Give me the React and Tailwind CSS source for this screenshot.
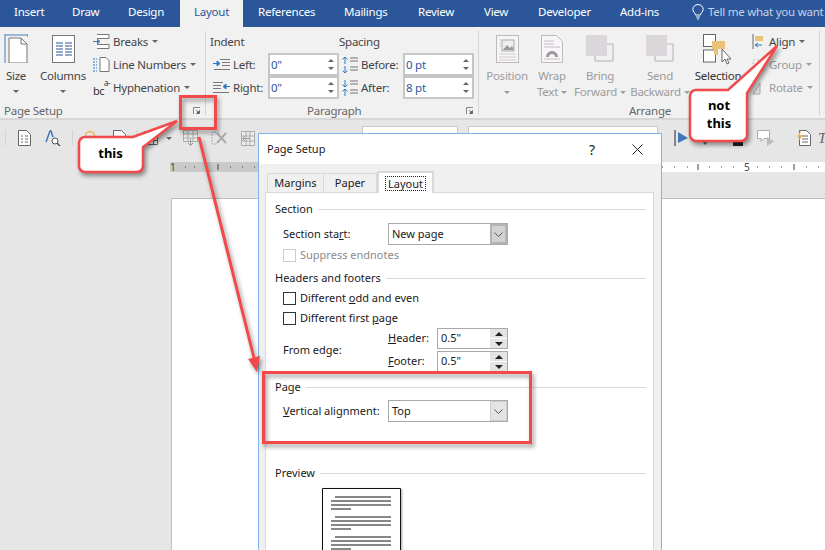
import React from "react";

const Caret = ({ className = "" }) => (
  <span className={`inline-block w-0 h-0 border-l-[3px] border-r-[3px] border-t-[3px] border-l-transparent border-r-transparent border-t-[#666] ${className}`} />
);

const Launcher = ({ className = "" }) => (
  <svg width="8" height="8" viewBox="0 0 8 8" className={className}>
    <path d="M.5 7V.5H7" fill="none" stroke="#888" />
    <path d="M3 3l2 2M6.500 3.500v3h-3z" fill="#555" stroke="#555" strokeWidth=".7" />
  </svg>
);

const Spin = ({ value }) => (
  <div className="w-[71px] h-[23px] shrink-0 border-2 border-[#c6c6c6] bg-white flex items-center justify-between pl-[1px] pr-[3px]">
    <span className="text-[#2b579a]">{value}</span>
    <span className="flex flex-col gap-[5px]">
      <span className="w-0 h-0 border-l-[3px] border-r-[3px] border-b-[3px] border-l-transparent border-r-transparent border-b-[#666]" />
      <span className="w-0 h-0 border-l-[3px] border-r-[3px] border-t-[3px] border-l-transparent border-r-transparent border-t-[#666]" />
    </span>
  </div>
);

const Legend = ({ children, className = "" }) => (
  <div className={`h-5 flex items-center gap-[5px] ${className}`}>
    <span>{children}</span>
    <span className="flex-1 h-[1px] bg-[#d8d8d8]" />
  </div>
);

const Select = ({ value, dark }) => (
  <div className="w-[120px] h-[22px] border border-[#a9a9a9] flex items-center bg-white">
    <span className="flex-1 pl-[3px]">{value}</span>
    <span className={`w-[17px] h-full flex items-center justify-center ${dark ? "bg-[#d2d2d2] border-2 border-[#b4b4b4]" : "bg-[#e4e4e4] border border-[#cfcfcf]"}`}>
      <svg width="9" height="5" viewBox="0 0 9 5"><path d="M.5.5l4 4 4-4" fill="none" stroke="#555" /></svg>
    </span>
  </div>
);

const Check = ({ disabled, children }) => (
  <div className="h-5 flex items-center gap-[4px] pl-[8px]">
    <span className={`w-[13px] h-[13px] border ${disabled ? "border-[#ccc]" : "border-[#333]"} bg-white`} />
    <span className={disabled ? "text-[#8a8a8a]" : ""}>{children}</span>
  </div>
);

const DlgSpin = ({ value }) => (
  <div className="w-[71px] h-[21px] border border-[#a9a9a9] flex items-center justify-between pl-[3px] bg-white">
    <span>{value}</span>
    <span className="w-[17px] h-full flex flex-col gap-[1px] bg-white">
      <span className="flex-1 bg-[#e4e4e4] flex items-center justify-center"><span className="w-0 h-0 border-l-[4px] border-r-[4px] border-b-[4px] border-l-transparent border-r-transparent border-b-[#222]" /></span>
      <span className="flex-1 bg-[#e4e4e4] flex items-center justify-center"><span className="w-0 h-0 border-l-[4px] border-r-[4px] border-t-[4px] border-l-transparent border-r-transparent border-t-[#222]" /></span>
    </span>
  </div>
);

const GrayBtn = ({ top, bottom, icon, width, caretInline, ml = "" }) => (
  <div className={`flex flex-col items-center text-[#9c9c9c] shrink-0 ${width} ${ml}`}>
    <div className="h-[41px] flex items-start pt-[8px]">{icon}</div>
    <div className="h-[16px] leading-[16px] whitespace-nowrap">{top}</div>
    <div className="h-[16px] leading-[16px] whitespace-nowrap flex items-center gap-[3px]">
      {bottom}
      {caretInline && <Caret className="opacity-60" />}
    </div>
  </div>
);

const BringIcon = () => (
  <svg width="28" height="27" viewBox="0 0 28 27">
    <path d="M9 21v5h18V9h-6" fill="#f3f0f3" stroke="#b5b2b5" />
    <rect x="0" y="0" width="21" height="21" fill="#dad6da" />
  </svg>
);

const Sep = () => <span className="w-[1px] h-[84px] mt-[4px] bg-[#d4d4d4] shrink-0" />;

export default function App() {
  return (
    <div className="relative w-[825px] h-[550px] overflow-hidden bg-[#e6e6e6] text-[11.5px] tracking-[-0.25px] text-[#444] font-['Noto_Sans',sans-serif]">
      {/* tab strip */}
      <div className="h-[27px] bg-[#2b579a] flex items-start text-white whitespace-nowrap leading-[24px] [&>*]:shrink-0">
        <span className="ml-[14px] w-[29px]">Insert</span>
        <span className="ml-[29px] w-[27px]">Draw</span>
        <span className="ml-[29px] w-[36px]">Design</span>
        <span className="ml-[16px] w-[63px] h-full bg-[#f1f1f1] text-[#2b579a] text-center">Layout</span>
        <span className="ml-[15px] w-[57px]">References</span>
        <span className="ml-[29px] w-[45px]">Mailings</span>
        <span className="ml-[29px] w-[37px]">Review</span>
        <span className="ml-[29px] w-[25px]">View</span>
        <span className="ml-[29px] w-[53px]">Developer</span>
        <span className="ml-[29px] w-[42px]">Add-ins</span>
        <svg className="ml-[30px] mt-[4px]" width="12" height="16" viewBox="0 0 12 16" fill="none" stroke="#fff">
          <path d="M3.5 11C3 8 .8 8 .8 5.5a5.2 5 0 0 1 10.4 0C11.200 8 9 8 8.500 11zM4 13h4M5 15h2" />
        </svg>
        <span className="ml-[4px] text-[#c5d2e6]">Tell me what you want</span>
      </div>

      {/* ribbon */}
      <div className="h-[93px] bg-[#f1f1f1] border-b-2 border-[#d6d6d6] flex items-start">
        <div className="w-[205px] shrink-0">
          <div className="h-[75px] flex">
            <div className="w-[32px] flex flex-col items-center shrink-0">
              <svg width="24" height="29" viewBox="0 0 24 29" className="mt-[7px]">
                <path d="M1 1h23M1 0v3M24 0v3M1 3v26" stroke="#4a7ebb" fill="none" />
                <path d="M5 4h12l6 6v19H5z" fill="#fff" stroke="#777" />
                <path d="M17 4v6h6" fill="none" stroke="#777" />
              </svg>
              <span className="mt-[5px] leading-[16px]">Size</span>
              <Caret className="mt-[6px]" />
            </div>
            <div className="ml-[6px] w-[50px] flex flex-col items-center shrink-0">
              <svg width="23" height="28" viewBox="0 0 23 28" className="mt-[8px]">
                <rect x=".5" y=".5" width="22" height="27" fill="#fff" stroke="#777" />
                <path d="M4 8h7M13 8h7M4 11h7M13 11h7M4 14h7M13 14h7M4 17h7M13 17h7M4 20h7M13 20h7" stroke="#2b579a" />
              </svg>
              <span className="mt-[5px] leading-[16px]">Columns</span>
              <Caret className="mt-[6px]" />
            </div>
            <div className="ml-[5px] flex flex-col pt-[3px] whitespace-nowrap">
              <div className="h-[23px] flex items-center gap-[3px]">
                <svg width="17" height="15" viewBox="0 0 17 15"><path d="M4 .500h12v4H4M4 14.500h12v-4H4" fill="#fff" stroke="#777" /><path d="M0 7.500h6M4 5l3 2.500L4 10" stroke="#4a7ebb" fill="#4a7ebb" /></svg>
                <span>Breaks</span><Caret className="ml-[1px]" />
              </div>
              <div className="h-[23px] flex items-center gap-[3px]">
                <svg width="17" height="15" viewBox="0 0 17 15"><path d="M7 .500h6l3 3v11H7z" fill="#fff" stroke="#777" /><path d="M0 2h4M0 5h4M0 8h4M0 11h4M0 14h4" stroke="#2b79c2" strokeDasharray="2 1" /></svg>
                <span>Line Numbers</span><Caret className="ml-[1px]" />
              </div>
              <div className="h-[23px] flex items-center gap-[3px]">
                <span className="w-[17px] h-[17px] flex flex-col text-[#333] tracking-tighter">
                  <span className="h-[7px] text-[8px] leading-[7px] pl-[11px]">a-</span>
                  <span className="h-[10px] w-[11px] text-[11px] leading-[10px]">bc</span>
                </span>
                <span>Hyphenation</span><Caret className="ml-[1px]" />
              </div>
            </div>
          </div>
          <div className="h-[18px] pl-[4px] pr-[4px] text-[#666] flex items-center justify-between">
            <span>Page Setup</span>
            <Launcher />
          </div>
        </div>
        <Sep />

        <div className="w-[272px] shrink-0">
          <div className="h-[75px] flex">
            <div className="w-[133px] pl-[4px] pt-[5px] shrink-0">
              <div className="h-[20px] leading-[20px]">Indent</div>
              <div className="h-[23px] flex items-center mt-[1px]">
                <svg className="ml-[3px]" width="17" height="11" viewBox="0 0 17 11"><path d="M7 .500h10M9 3.500h8M9 6.500h8M1 10.500h16" stroke="#777" /><path d="M0 4.500h5M4 2l3 2.500L4 7z" stroke="#2b79c2" fill="#2b79c2" /></svg>
                <span className="ml-[3px] w-[35px]">Left:</span>
                <Spin value={'0"'} />
              </div>
              <div className="h-[23px] flex items-center">
                <svg className="ml-[3px]" width="17" height="11" viewBox="0 0 17 11"><path d="M0 .500h10M0 3.500h8M0 6.500h8M0 10.500h16" stroke="#777" /><path d="M17 4.500h-5M13 2l-3 2.500L13 7z" stroke="#2b79c2" fill="#2b79c2" /></svg>
                <span className="ml-[3px] w-[35px]">Right:</span>
                <Spin value={'0"'} />
              </div>
            </div>
            <div className="pt-[5px]">
              <div className="h-[20px] leading-[20px]">Spacing</div>
              <div className="h-[23px] flex items-center mt-[1px]">
                <svg className="ml-[3px]" width="16" height="16" viewBox="0 0 16 16"><path d="M3 0v7M3 9v7M.5 2.500L3 0l2.500 2.500M.5 13.500L3 16l2.500-2.500" stroke="#2b79c2" fill="none" /><path d="M8 1h8M8 4h8M8 10h8M8 13h8" stroke="#777" /></svg>
                <span className="ml-[3px] w-[42px]">Before:</span>
                <Spin value="0 pt" />
              </div>
              <div className="h-[23px] flex items-center">
                <svg className="ml-[3px]" width="16" height="16" viewBox="0 0 16 16"><path d="M3 0v7M3 9v7M.5 4.500L3 7l2.500-2.500M.5 11.500L3 9l2.500 2.500" stroke="#2b79c2" fill="none" /><path d="M8 1h8M8 4h8M8 10h8M8 13h8" stroke="#777" /></svg>
                <span className="ml-[3px] w-[42px]">After:</span>
                <Spin value="8 pt" />
              </div>
            </div>
          </div>
          <div className="h-[18px] flex items-center justify-between pl-[101px] pr-[4px] text-[#666]">
            <span>Paragraph</span>
            <Launcher />
          </div>
        </div>
        <Sep />

        <div className="w-[340px] shrink-0">
          <div className="h-[75px] flex">
            <GrayBtn
              width="w-[50px]"
              ml="ml-[3px]"
              top="Position"
              bottom={<Caret className="opacity-60" />}
              icon={
                <svg width="23" height="28" viewBox="0 0 23 28">
                  <rect x=".5" y=".5" width="22" height="27" fill="#f7f5f7" stroke="#bdb9bd" />
                  <rect x="6" y="5" width="12" height="11" fill="#eee" stroke="#aaa" />
                  <path d="M7 15l4-5 3 3 2-2 2 4z" fill="#999" />
                  <path d="M3 19h17M3 22h17M3 25h17M3 5h2M3 8h2M3 11h2" stroke="#cfcbcf" />
                </svg>
              }
            />
            <GrayBtn
              width="w-[40px]"
              top="Wrap"
              bottom="Text"
              caretInline
              icon={
                <svg width="22" height="28" viewBox="0 0 22 28">
                  <path d="M.5.500h15l6 6v21H.5z" fill="#f7f5f7" stroke="#bdb9bd" />
                  <path d="M3 6h10M3 9h10M3 12h16M3 24h16" stroke="#c4c0c4" />
                  <path d="M5 22a6 6 0 0 1 12 0h-3a3 3 0 0 0-6 0z" fill="#9a969a" />
                </svg>
              }
            />
            <GrayBtn width="w-[56px]" top="Bring" bottom="Forward" caretInline icon={<BringIcon />} />
            <GrayBtn width="w-[64px]" top="Send" bottom="Backward" caretInline icon={<BringIcon />} />
            <div className="w-[52px] shrink-0 flex flex-col items-center text-[#333]">
              <div className="h-[41px] pt-[7px]">
                <svg width="30" height="32" viewBox="0 0 30 32">
                  <rect x=".5" y=".5" width="12" height="12" fill="#fff" stroke="#666" />
                  <rect x=".5" y="16" width="12" height="12" fill="#fff" stroke="#666" />
                  <path d="M9 7h13v8h-7v6h-4v-6H9z" fill="#eac27a" />
                  <path d="M19 15v13l3-3 2 5 2-1-2-4h4z" fill="#fff" stroke="#666" />
                </svg>
              </div>
              <span className="leading-[16px]">Selection</span>
            </div>
            <div className="ml-[8px] flex flex-col pt-[3px] whitespace-nowrap">
              <div className="h-[23px] flex items-center gap-[4px]">
                <svg width="13" height="16" viewBox="0 0 13 16"><path d="M1 0v15" stroke="#666" /><rect x="3" y="2" width="8" height="5" fill="#eac27a" /><path d="M10 11H4M6 9l-3 2 3 2" stroke="#2b79c2" fill="none" /></svg>
                <span>Align</span><Caret />
              </div>
              <div className="h-[23px] flex items-center gap-[4px] text-[#9c9c9c]">
                <svg width="13" height="16" viewBox="0 0 13 16"><rect x="1" y="3" width="11" height="11" fill="none" stroke="#bbb" strokeDasharray="2 2" /></svg>
                <span>Group</span><Caret className="opacity-60" />
              </div>
              <div className="h-[23px] flex items-center gap-[4px] text-[#9c9c9c]">
                <svg width="13" height="16" viewBox="0 0 13 16"><path d="M1 14L8 3v11z" fill="#ddd" stroke="#aaa" /></svg>
                <span>Rotate</span><Caret className="opacity-60" />
              </div>
            </div>
          </div>
          <div className="h-[18px] flex items-center text-[#666] pl-[150px]">Arrange</div>
        </div>
        <Sep />
      </div>

      {/* quick toolbar */}
      <div className="h-[42px] pb-[6px] flex items-center [&>*]:shrink-0">
        <span className="ml-[5px] w-[1px] h-[16px] bg-[#d4d4d4]" />
        <svg className="ml-[12px]" width="13" height="16" viewBox="0 0 13 16"><path d="M.5.500h8l4 4v11H.5z" fill="#fff" stroke="#666" /><path d="M3 6h2M7 6h3M3 9h2M7 9h3M3 12h2M7 12h3" stroke="#666" /></svg>
        <svg className="ml-[14px]" width="16" height="16" viewBox="0 0 16 16"><path d="M1 12L5 1h1l2 6" fill="none" stroke="#3f78b5" strokeWidth="1.500" /><circle cx="10" cy="11" r="3" fill="#fff" stroke="#555" /><path d="M12 13l3 3" stroke="#555" strokeWidth="1.500" /></svg>
        <span className="ml-[11px] w-[1px] h-[16px] bg-[#d4d4d4]" />
        <svg className="ml-[11px]" width="12" height="16" viewBox="0 0 12 16"><circle cx="6" cy="6" r="4.500" fill="none" stroke="#eab45a" strokeWidth="1.500" /></svg>
        <svg className="ml-[17px]" width="13" height="16" viewBox="0 0 13 16"><path d="M.5.500h8l4 4v11H.5z" fill="#fff" stroke="#666" /></svg>
        <span className="ml-[10px] w-[1px] h-[16px] bg-[#d4d4d4]" />
        <svg className="ml-[7px]" width="14" height="14" viewBox="0 0 14 14"><path d="M.5.500h13v13H.5zM.5 5h13M.5 9.500h13M5 .500v13M9.500.500v13" fill="#fff" stroke="#666" /></svg>
        <Caret className="ml-[8px]" />
        <svg className="ml-[11px]" width="15" height="16" viewBox="0 0 15 16"><path d="M.5.500h14v11H.5zM.5 4h14M.5 8h14M5 .500v11M10 .500v11" fill="#eee" stroke="#aaa" /><path d="M7.500 9v6M5 13l2.500 2.500L10 13" stroke="#999" fill="none" /></svg>
        <svg className="ml-[13px]" width="16" height="14" viewBox="0 0 16 14"><path d="M5 1H1v12h4" fill="none" stroke="#aaa" strokeDasharray="2 1" /><path d="M6 2l9 10M15 2L6 12" stroke="#aaa" strokeWidth="2" /></svg>
        <svg className="ml-[14px]" width="14" height="15" viewBox="0 0 14 15"><path d="M.5.500h13v14H.5zM5 .500v14M9 .500v14M.5 5h13M.5 10h13" fill="#eee" stroke="#aaa" /><path d="M9 7.500H2M4 5L1.500 7.500 4 10" stroke="#999" fill="none" /></svg>
        <span className="ml-[107px] w-[96px] h-[24px] bg-white border border-[#c8c8c8]" />
        <span className="ml-[10px] w-[190px] h-[24px] bg-white border border-[#c8c8c8]" />
        <svg className="ml-[16px]" width="14" height="16" viewBox="0 0 14 16"><path d="M1 0v16" stroke="#666" strokeWidth="1.500" /><path d="M4 2l10 6-10 5z" fill="#3f78b5" /></svg>
        <svg className="ml-[14px]" width="6" height="16" viewBox="0 0 6 16"><path d="M0 11h6l-3 4z" fill="#3c7a4a" /></svg>
        <svg className="ml-[25px]" width="10" height="16" viewBox="0 0 10 16"><rect y="9" width="10" height="7" fill="#222" /></svg>
        <svg className="ml-[14px]" width="18" height="16" viewBox="0 0 18 16"><path d="M.5.500h12v8H7l-3 3v-3H.500z" fill="#fff" stroke="#aaa" /><path d="M10 7l7 4.500-7 4.500z" fill="#bbb" /></svg>
        <svg className="ml-[22px]" width="14" height="16" viewBox="0 0 14 16"><path d="M2.500.500h7l4 4v11h-11z" fill="#fff" stroke="#666" /><path d="M5 6h6M5 9h6M5 12h6" stroke="#666" /><path d="M4 0L0 7h3l-2 5 5-7H3z" fill="#eab45a" /></svg>
        <span className="ml-[7px] italic text-[15px] text-[#666] font-['Liberation_Serif',serif]">T</span>
      </div>

      {/* ruler */}
      <div className="h-[10px] flex text-[10px] leading-[10px]">
        <div className="ml-[170px] w-[88px] bg-[#c9c9c9] flex items-center shrink-0">
          <span className="w-[6px]">1</span>
          <svg width="82" height="10" viewBox="0 0 82 10">
            <path d="M9 5h1M18 5h1M30 5h1M54 5h1M66 5h1M78 5h1M42 2v6" stroke="#444" />
          </svg>
        </div>
        <div className="ml-[403px] flex-1 bg-white relative text-[#444]">
          <svg width="164" height="10" viewBox="0 0 164 10">
            <path d="M1 5h1M13 5h1M26 5h1M48 5h1M60 5h1M72 5h1M96 5h1M108 5h1M120 5h1M145 5h1M157 5h1M37 2v6M133 2v6" stroke="#444" />
          </svg>
          <span className="absolute left-[83px] top-0">5</span>
        </div>
      </div>

      {/* page */}
      <div className="ml-[171px] mt-[26px] h-[352px] bg-white border-t border-l border-[#bdbdbd]" />

      {/* dialog window */}
      <div className="absolute left-[258px] top-[133px] w-[404px] h-[417px] border border-[#7fb5e8] border-b-0 bg-[#f0f0f0] text-[#1a1a1a] text-[11px] tracking-normal">
        <div className="h-[30px] bg-white flex items-center pl-[8px]">
          <span className="flex-1">Page Setup</span>
          <span className="mr-[37px] text-[14px]">?</span>
          <svg className="mr-[18px]" width="11" height="11" viewBox="0 0 11 11"><path d="M.5.500l10 10M10.500.500l-10 10" stroke="#222" /></svg>
        </div>
        <div className="h-[28px] pl-[8px] flex items-end relative z-10">
          <span className="w-[57px] h-[19px] flex items-center justify-center border border-b-0 border-[#d9d9d9]">Margins</span>
          <span className="w-[53px] h-[19px] flex items-center justify-center border border-b-0 border-l-0 border-[#d9d9d9]">Paper</span>
          <span className="w-[57px] h-[22px] flex items-center justify-center border-2 border-b-0 border-[#d9d9d9] bg-white -mb-[1px]">
            <span className="border border-dotted border-[#222] px-[2px] leading-[13px]">Layout</span>
          </span>
        </div>
        <div className="ml-[6px] w-[389px] h-[360px] bg-white border border-[#d9d9d9] pl-[9px] pr-[7px] pt-[6px]">
          <Legend>Section</Legend>
          <div className="mt-[4px] h-[22px] flex items-center pl-[8px]">
            <span className="w-[105px]">Section sta<u>r</u>t:</span>
            <Select value="New page" dark />
          </div>
          <Check disabled>Suppress endnotes</Check>
          <Legend className="mt-[3px]">Headers and footers</Legend>
          <Check>Different <u>o</u>dd and even</Check>
          <Check>Different first <u>p</u>age</Check>
          <div className="flex items-center pl-[8px] h-[44px]">
            <span className="w-[105px]">From edge:</span>
            <div className="flex flex-col gap-[2px]">
              <div className="flex items-center"><span className="w-[49px]"><u>H</u>eader:</span><DlgSpin value={'0.5"'} /></div>
              <div className="flex items-center"><span className="w-[49px]"><u>F</u>ooter:</span><DlgSpin value={'0.5"'} /></div>
            </div>
          </div>
          <Legend className="mt-[5px]">Page</Legend>
          <div className="mt-[3px] h-[22px] flex items-center pl-[8px]">
            <span className="w-[105px]"><u>V</u>ertical alignment:</span>
            <Select value="Top" />
          </div>
          <Legend className="mt-[41px]">Preview</Legend>
          <svg className="ml-[47px] mt-[5px] drop-shadow-[1px_1px_1px_rgba(0,0,0,0.35)]" width="79" height="62" viewBox="0 0 79 62">
            <path d="M.5 62V.5h78V62" fill="#fff" stroke="#111" />
            <path d="M13 9h56M9 13h60M9 17h60M9 21h20M13 29h56M9 33h60M9 37h60M9 41h20M13 49h56M9 53h60M9 57h60M9 61h20" stroke="#111" />
          </svg>
        </div>
      </div>

      {/* annotations */}
      <svg className="absolute left-0 top-0 pointer-events-none drop-shadow-[2px_3px_2px_rgba(0,0,0,0.4)]" width="825" height="550" viewBox="0 0 825 550" fill="none">
        <rect x="180.500" y="96.500" width="35" height="32" stroke="#f24a4a" strokeWidth="3" />
        <rect x="263.500" y="372.500" width="267" height="70" stroke="#f24a4a" strokeWidth="3" />
        <path d="M199 137L254 358" stroke="#f24a4a" strokeWidth="3" />
        <path d="M257 372l-9-13 12-3z" fill="#f24a4a" />
        <path d="M85 137H133L177 121L143 147V166a6 6 0 0 1-6 6H85a6 6 0 0 1-6-6V143a6 6 0 0 1 6-6z" fill="#fff" stroke="#f24a4a" strokeWidth="2.500" />
        <path d="M696 90H728L777 46L747 93V135a6 6 0 0 1-6 6H696a6 6 0 0 1-6-6V96a6 6 0 0 1 6-6z" fill="#fff" stroke="#f24a4a" strokeWidth="2.500" />
      </svg>
      <div className="absolute left-[78px] top-[136px] w-[65px] h-[36px] flex items-center justify-center font-bold text-[13px] tracking-normal text-black">this</div>
      <div className="absolute left-[690px] top-[88px] w-[58px] h-[52px] flex items-center justify-center text-center font-bold text-[13px] tracking-normal leading-[18px] text-black">not<br />this</div>
    </div>
  );
}
